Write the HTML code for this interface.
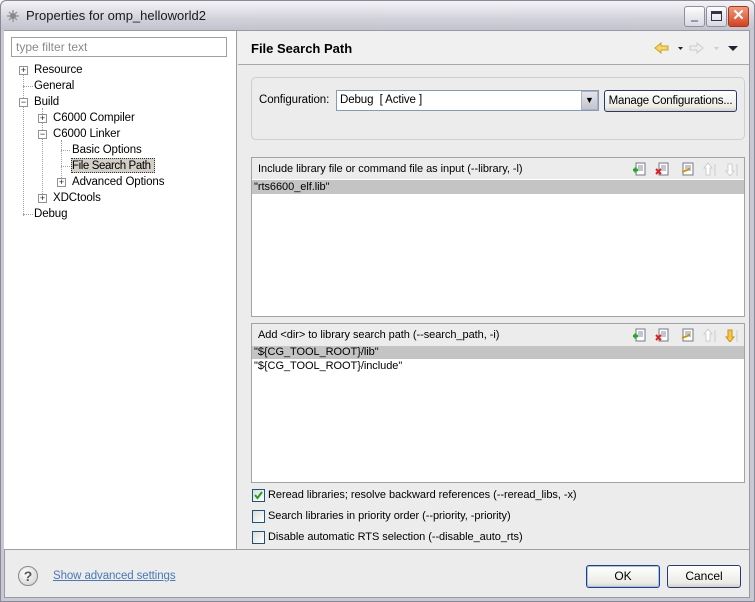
<!DOCTYPE html>
<html><head><style>
*{margin:0;padding:0;box-sizing:border-box}
body{width:755px;height:602px;overflow:hidden;background:#fff;font-family:"Liberation Sans",sans-serif;font-size:11px;color:#000;position:relative}
.a{position:absolute}
.win{left:0;top:0;width:755px;height:602px;background:#c9c9d4;border:1px solid #8a8a96;border-radius:6px 6px 0 0}
.title{left:1px;top:1px;width:753px;height:29px;background:linear-gradient(#f4f4f7,#d2d2dc 60%,#c3c3cf);border-radius:6px 6px 0 0}
.tb{top:6px;width:21px;height:21px;border-radius:3px;border:1px solid #8f8fa0;background:linear-gradient(#fdfdfd,#d8d8e2)}
.client{left:4px;top:30px;width:746px;height:568px;background:#ececec;border:1px solid #9a9aa6}
.left{left:4px;top:31px;width:233px;height:518px;background:#fff;border-right:1px solid #a0a0a0}
.box{background:#fff;border:1px solid #a3a3a3}
.t{position:absolute;white-space:nowrap}
.pm{position:absolute;width:9px;height:9px;border:1px solid #919191;background:#fff;font-size:9px;line-height:7px;text-align:center;color:#222}
.dot{position:absolute;border-left:1px dotted #a0a0a0}
.doth{position:absolute;border-top:1px dotted #a0a0a0}
.btn{position:absolute;border:1px solid #2a3a70;border-radius:3px;background:linear-gradient(#fff,#ecebe6 80%,#d6d0c5);text-align:center;white-space:nowrap}
.cb{position:absolute;width:13px;height:13px;border:1px solid #1c5180;background:linear-gradient(135deg,#dcdcd7,#fff)}
.ic{position:absolute;top:0;width:14px;height:14px}
.tr{font-size:11.5px;letter-spacing:-0.1px}
.s{font-size:11px;letter-spacing:-0.05px}
</style></head><body>
<div class="a win"></div>
<div class="a title"></div>
<svg class="a" style="left:6px;top:9px" width="14" height="14"><circle cx="7" cy="7" r="3" fill="#888"/><path d="M7 1v3M7 10v3M1 7h3M10 7h3M3 3l2 2M9 9l2 2M11 3L9 5M3 11l2-2" stroke="#999" stroke-width="1.4"/></svg>
<div class="t" style="left:26px;top:8px;font-size:13px;color:#1a1a1a">Properties for omp_helloworld2</div>
<div class="a tb" style="left:684px"><div class="a" style="left:6px;top:13px;width:7px;height:2px;background:#99a"></div></div>
<div class="a tb" style="left:706px"><div class="a" style="left:4px;top:4px;width:11px;height:10px;border:1px solid #334;border-top-width:3px"></div></div>
<div class="a tb" style="left:728px;background:linear-gradient(#f19a7e,#d5421e);border-color:#a8361b;color:#fff;font-size:15px;line-height:18px;text-align:center;font-weight:bold">✕</div>
<div class="a client"></div>
<div class="a left"></div>
<div class="a box" style="left:11px;top:37px;width:216px;height:20px;border-color:#a0a0a0"></div>
<div class="t" style="left:16px;top:40px;color:#8a8a8a;font-size:12px">type filter text</div>
<!-- tree -->
<div class="dot" style="left:23px;top:74px;height:142px"></div>
<div class="dot" style="left:42px;top:108px;height:90px"></div>
<div class="dot" style="left:61px;top:140px;height:42px"></div>
<div class="doth" style="left:23px;top:86px;width:10px"></div>
<div class="doth" style="left:23px;top:214px;width:10px"></div>
<div class="doth" style="left:61px;top:150px;width:9px"></div>
<div class="doth" style="left:61px;top:166px;width:9px"></div>
<div class="pm" style="left:19px;top:66px">+</div>
<div class="pm" style="left:19px;top:98px">−</div>
<div class="pm" style="left:38px;top:114px">+</div>
<div class="pm" style="left:38px;top:130px">−</div>
<div class="pm" style="left:57px;top:178px">+</div>
<div class="pm" style="left:38px;top:194px">+</div>
<div class="t tr" style="left:34px;top:64px">Resource</div>
<div class="t tr" style="left:34px;top:80px">General</div>
<div class="t tr" style="left:34px;top:96px">Build</div>
<div class="t tr" style="left:53px;top:112px">C6000 Compiler</div>
<div class="t tr" style="left:53px;top:128px">C6000 Linker</div>
<div class="t tr" style="left:72px;top:144px">Basic Options</div>
<div class="a" style="left:71px;top:158px;width:84px;height:15px;background:#d4d0c8;border:1px dotted #333"></div>
<div class="t tr" style="left:72px;top:160px;letter-spacing:-0.4px">File Search Path</div>
<div class="t tr" style="left:72px;top:176px">Advanced Options</div>
<div class="t tr" style="left:53px;top:192px">XDCtools</div>
<div class="t tr" style="left:34px;top:208px">Debug</div>
<!-- right -->
<div class="a" style="left:238px;top:31px;width:511px;height:34px;background:#f0f0f0;border-bottom:1px solid #a8a8a8"></div>
<div class="t" style="left:251px;top:41px;font-size:13px;font-weight:bold">File Search Path</div>
<svg class="a" style="left:654px;top:41px" width="90" height="14"><path d="M1 7l6-5v3h7v4H7v3z" fill="#f8d860" stroke="#c8a030"/><path d="M24 6h5l-2.5 3z" fill="#222"/><path d="M49 7l-6-5v3h-7v4h7v3z" fill="#eee" stroke="#ccc"/><path d="M60 6h5l-2.5 3z" fill="#ccc"/><path d="M74 5h10l-5 5z" fill="#223"/></svg>
<div class="a" style="left:251px;top:77px;width:494px;height:63px;border:1px solid #cfcfcf;border-radius:5px"></div>
<div class="t tr" style="left:259px;top:94px">Configuration:</div>
<div class="a box" style="left:336px;top:90px;width:263px;height:21px;border-color:#7f9db9"></div>
<div class="t tr" style="left:340px;top:94px">Debug&nbsp; [ Active ]</div>
<div class="a" style="left:581px;top:91px;width:17px;height:19px;background:linear-gradient(#e4e4ea,#c4c4d0);border:1px solid #b0b0c0;text-align:center;font-size:9px;line-height:17px">▼</div>
<div class="btn" style="left:604px;top:90px;width:133px;height:22px;font-size:11.5px;letter-spacing:-0.2px;line-height:20px">Manage Configurations...</div>
<!-- list1 -->
<div class="a box" style="left:251px;top:157px;width:494px;height:160px"></div>
<div class="a" style="left:252px;top:158px;width:492px;height:21px;background:#ececec"></div>
<div class="t s" style="left:258px;top:163px">Include library file or command file as input (--library, -l)</div>
<div class="a" style="left:252px;top:180px;width:492px;height:14px;background:#c4c4c4"></div>
<div class="t s" style="left:254px;top:181px">"rts6600_elf.lib"</div>
<!-- list2 -->
<div class="a box" style="left:251px;top:323px;width:494px;height:160px"></div>
<div class="a" style="left:252px;top:324px;width:492px;height:22px;background:#ececec"></div>
<div class="t s" style="left:258px;top:329px">Add &lt;dir&gt; to library search path (--search_path, -i)</div>
<div class="a" style="left:252px;top:346px;width:492px;height:13px;background:#c4c4c4"></div>
<div class="t s" style="left:254px;top:346px">"${CG_TOOL_ROOT}/lib"</div>
<div class="t s" style="left:254px;top:360px">"${CG_TOOL_ROOT}/include"</div>
<!-- toolbar icons -->
<div class="a" style="left:632px;top:162px;width:108px;height:16px">
<svg class="ic" style="left:0"><rect x="4" y="1" width="9" height="12" fill="#fff" stroke="#778"/><path d="M6 4h5M6 6h5M6 8h5" stroke="#88a"/><path d="M1 8h5M3.5 5.5v5" stroke="#2a2" stroke-width="2.4"/></svg>
<svg class="ic" style="left:23px"><rect x="4" y="1" width="9" height="12" fill="#fff" stroke="#778"/><path d="M6 4h5M6 6h5M6 8h5" stroke="#88a"/><path d="M1 7l5 5M6 7l-5 5" stroke="#d22" stroke-width="2"/></svg>
<svg class="ic" style="left:48px"><rect x="3" y="1" width="10" height="12" fill="#fff" stroke="#778"/><path d="M5 4h6M5 6h6M5 8h6" stroke="#88a"/><path d="M2 10l8-3" stroke="#c90" stroke-width="2"/></svg>
<svg class="ic" style="left:70px"><path d="M6 1l-4 5h2v7h4V6h2z" fill="#fff" stroke="#ccc"/><path d="M13 2v12" stroke="#ccc"/></svg>
<svg class="ic" style="left:92px"><path d="M6 14l-4-5h2V2h4v7h2z" fill="#fff" stroke="#ccc"/><path d="M13 2v12" stroke="#ccc"/></svg>
</div>
<div class="a" style="left:632px;top:328px;width:108px;height:16px">
<svg class="ic" style="left:0"><rect x="4" y="1" width="9" height="12" fill="#fff" stroke="#778"/><path d="M6 4h5M6 6h5M6 8h5" stroke="#88a"/><path d="M1 8h5M3.5 5.5v5" stroke="#2a2" stroke-width="2.4"/></svg>
<svg class="ic" style="left:23px"><rect x="4" y="1" width="9" height="12" fill="#fff" stroke="#778"/><path d="M6 4h5M6 6h5M6 8h5" stroke="#88a"/><path d="M1 7l5 5M6 7l-5 5" stroke="#d22" stroke-width="2"/></svg>
<svg class="ic" style="left:48px"><rect x="3" y="1" width="10" height="12" fill="#fff" stroke="#778"/><path d="M5 4h6M5 6h6M5 8h6" stroke="#88a"/><path d="M2 10l8-3" stroke="#c90" stroke-width="2"/></svg>
<svg class="ic" style="left:70px"><path d="M6 1l-4 5h2v7h4V6h2z" fill="#fff" stroke="#ccc"/><path d="M13 2v12" stroke="#ccc"/></svg>
<svg class="ic" style="left:92px"><path d="M6 14l-4-5h2V2h4v7h2z" fill="#f8c840" stroke="#c89020"/><path d="M13 2v12" stroke="#ccc"/></svg>
</div>
<!-- checkboxes -->
<div class="cb" style="left:252px;top:489px"><svg width="11" height="11" style="position:absolute;left:0;top:0"><path d="M2 5l2.5 3L9 2" stroke="#21a121" stroke-width="2" fill="none"/></svg></div>
<div class="t s" style="left:268px;top:489px">Reread libraries; resolve backward references (--reread_libs, -x)</div>
<div class="cb" style="left:252px;top:510px"></div>
<div class="t s" style="left:268px;top:510px">Search libraries in priority order (--priority, -priority)</div>
<div class="cb" style="left:252px;top:531px"></div>
<div class="t s" style="left:268px;top:531px">Disable automatic RTS selection (--disable_auto_rts)</div>
<!-- bottom -->
<div class="a" style="left:5px;top:549px;width:744px;height:1px;background:#a0a0a0"></div>
<div class="a" style="left:18px;top:566px;width:20px;height:20px;border-radius:50%;border:1px solid #888;background:radial-gradient(circle at 40% 35%,#fff,#ccc);text-align:center;font-weight:bold;font-size:14px;line-height:18px;color:#555">?</div>
<div class="t tr" style="left:53px;top:570px;color:#4a79b4;text-decoration:underline">Show advanced settings</div>
<div class="btn" style="left:586px;top:565px;width:74px;height:23px;font-size:12px;line-height:21px;border-color:#1c3e8c;box-shadow:inset 0 0 0 1px #a8c0ef">OK</div>
<div class="btn" style="left:667px;top:565px;width:74px;height:23px;font-size:12px;line-height:21px">Cancel</div>
</body></html>
